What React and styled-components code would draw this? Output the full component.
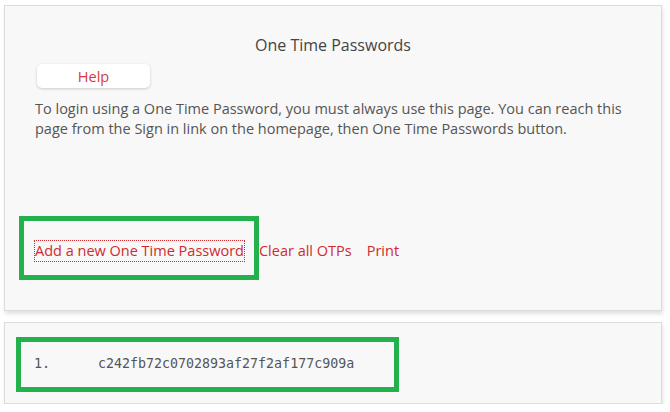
import React from 'react';
import styled, {createGlobalStyle} from "styled-components";

const GlobalStyle = createGlobalStyle`
  html, body {
    margin: 0;
    padding: 0;
    background: #ffffff;
  }
  body {
    font-family: "Open Sans", "Liberation Sans", Arial, sans-serif;
  }
`;

const Page = styled.div`
  width: 658px;
  padding: 5px 0 0 4px;
  display: flex;
  flex-direction: column;
  gap: 11px;
`;

const Panel = styled.section`
  background: #f8f8f8;
  border: 1px solid #dcdcdc;
  box-shadow: 1px 3px 4px rgba(0, 0, 0, 0.12);
  padding: ${props => props.$pad};
`;

const Title = styled.h2`
  margin: 0;
  text-align: center;
  font-size: 16px;
  line-height: 22px;
  font-weight: 400;
  color: #444;
`;

const HelpButton = styled.button`
  margin: 8px 0 0 2px;
  width: 113px;
  height: 24px;
  background: #fff;
  border: none;
  border-radius: 5px;
  box-shadow: 0 1px 3px rgba(0, 0, 0, 0.18);
  font-family: "Open Sans", "Liberation Sans", Arial, sans-serif;
  font-size: 14.5px;
  color: #d63a3a;
  padding: 0;
`;

const Intro = styled.p`
  margin: 11px 0 0;
  font-size: 14.5px;
  line-height: 20px;
  color: #555;
`;

const LinkRow = styled.div`
  margin-top: 102px;
  display: flex;
  gap: 15px;
  font-size: 14.5px;
  line-height: 20px;
`;

const Link = styled.a`
  position: relative;
  color: #d12a2e;
  text-decoration: none;
  outline: ${props => props.$focused ? "1px dotted #d12a2e" : "none"};
`;

const Highlight = styled.span`
  position: absolute;
  top: ${props => props.$t}px;
  right: ${props => props.$r}px;
  bottom: ${props => props.$b}px;
  left: ${props => props.$l}px;
  border: 5px solid #22b14c;
  pointer-events: none;
`;

const OtpRow = styled.div`
  position: relative;
  display: inline-flex;
  font-family: "DejaVu Sans Mono", "Liberation Mono", monospace;
  font-size: 13.3px;
  line-height: 20px;
  color: #555;
`;

const OtpNumber = styled.span`
  width: 64px;
`;

const otps = ["c242fb72c0702893af27f2af177c909a"];

export default function App() {
  return (
    <Page>
      <GlobalStyle />
      <Panel $pad="28px 30px 49px 30px">
        <Title>One Time Passwords</Title>
        <HelpButton>Help</HelpButton>
        <Intro>
          To login using a One Time Password, you must always use this page. You can reach this
          page from the Sign in link on the homepage, then One Time Passwords button.
        </Intro>
        <LinkRow>
          <Link href="#" $focused>
            Add a new One Time Password
            <Highlight $t={-25} $r={-15} $b={-19} $l={-16} />
          </Link>
          <Link href="#">Clear all OTPs</Link>
          <Link href="#">Print</Link>
        </LinkRow>
      </Panel>
      <Panel $pad="28px 30px 29px 29px">
        {otps.map((otp, index) => (
          <OtpRow key={index}>
            <OtpNumber>{index + 1}.</OtpNumber>
            {otp}
            <Highlight $t={-17} $r={-45} $b={-18} $l={-18} />
          </OtpRow>
        ))}
      </Panel>
    </Page>
  );
}
